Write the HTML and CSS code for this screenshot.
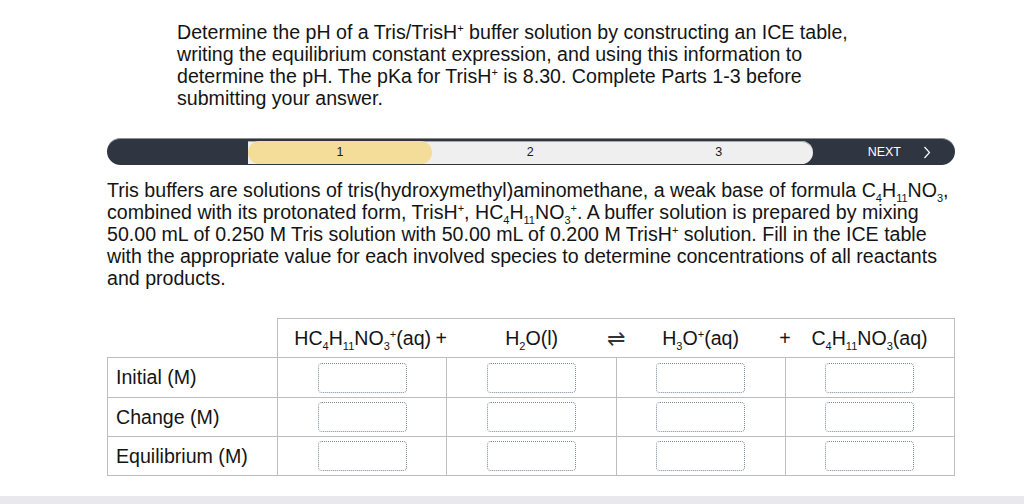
FILE: index.html
```html
<!DOCTYPE html>
<html>
<head>
<meta charset="utf-8">
<link rel="stylesheet" href="styles.css">
</head>
<body>
<div class="page">
  <p class="intro">Determine the pH of a Tris/TrisH<sup>+</sup> buffer solution by constructing an ICE table,<br>writing the equilibrium constant expression, and using this information to<br>determine the pH. The pKa for TrisH<sup>+</sup> is 8.30. Complete Parts 1-3 before<br>submitting your answer.</p>

  <div class="stepper">
    <div class="stepper-left"></div>
    <div class="track">
      <div class="step active">1</div>
      <div class="step">2</div>
      <div class="step">3</div>
    </div>
    <div class="next">
      <span class="next-label">NEXT</span>
      <svg class="chev" width="8" height="13" viewBox="0 0 8 13"><polyline points="1.5,1 6.5,6.5 1.5,12" fill="none" stroke="#ffffff" stroke-width="1.2"/></svg>
    </div>
  </div>

  <p class="body-text">Tris buffers are solutions of tris(hydroxymethyl)aminomethane, a weak base of formula C<sub>4</sub>H<sub>11</sub>NO<sub>3</sub>,<br>combined with its protonated form, TrisH<sup>+</sup>, HC<sub>4</sub>H<sub>11</sub>NO<sub>3</sub><sup>+</sup>. A buffer solution is prepared by mixing<br>50.00 mL of 0.250 M Tris solution with 50.00 mL of 0.200 M TrisH<sup>+</sup> solution. Fill in the ICE table<br>with the appropriate value for each involved species to determine concentrations of all reactants<br>and products.</p>

  <table class="ice">
    <colgroup>
      <col class="c-label"><col class="c-sp"><col class="c-sp"><col class="c-sp"><col class="c-sp">
    </colgroup>
    <thead>
      <tr class="head-row">
        <th class="blank"></th>
        <th class="eq" colspan="4">
          <div class="eq-line">
            <span class="sp">HC<sub>4</sub>H<sub>11</sub>NO<sub>3</sub><sup>+</sup>(aq)</span>
            <span class="op op-first">+</span>
            <span class="sp">H<sub>2</sub>O(l)</span>
            <span class="op arrow">⇌</span>
            <span class="sp">H<sub>3</sub>O<sup>+</sup>(aq)</span>
            <span class="op">+</span>
            <span class="sp">C<sub>4</sub>H<sub>11</sub>NO<sub>3</sub>(aq)</span>
          </div>
        </th>
      </tr>
    </thead>
    <tbody>
      <tr class="first-row">
        <td class="label">Initial (M)</td>
        <td><div class="box"></div></td>
        <td><div class="box"></div></td>
        <td><div class="box"></div></td>
        <td><div class="box"></div></td>
      </tr>
      <tr>
        <td class="label">Change (M)</td>
        <td><div class="box"></div></td>
        <td><div class="box"></div></td>
        <td><div class="box"></div></td>
        <td><div class="box"></div></td>
      </tr>
      <tr>
        <td class="label">Equilibrium (M)</td>
        <td><div class="box"></div></td>
        <td><div class="box"></div></td>
        <td><div class="box"></div></td>
        <td><div class="box"></div></td>
      </tr>
    </tbody>
  </table>
</div>
<div class="footer-bar"></div>
</body>
</html>
```
FILE: styles.css
```css
html, body {
  margin: 0;
  padding: 0;
  background: #ffffff;
}
body {
  width: 1024px;
  height: 504px;
  overflow: hidden;
  position: relative;
  font-family: "Liberation Sans", Arial, sans-serif;
  color: #141414;
}
.page {
  padding: 21px 0 0 107px;
  height: 475px;
}
p {
  margin: 0;
  font-size: 19.6px;
  line-height: 22px;
}
sup {
  font-size: 11px;
  line-height: 0;
  vertical-align: 7px;
}
sub {
  font-size: 11px;
  line-height: 0;
  vertical-align: -5px;
}
.intro {
  margin-left: 70px;
}

/* stepper */
.stepper {
  margin-top: 29px;
  width: 848px;
  height: 27px;
  background: #303542;
  border-radius: 14px;
  display: flex;
  align-items: center;
  box-sizing: border-box;
  border-top: 1px solid #8e8e8e;
}
.stepper-left {
  width: 141px;
  flex: none;
}
.track {
  width: 565px;
  height: 23px;
  flex: none;
  display: flex;
  background: #efefef;
  border-radius: 0 12px 12px 0;
  box-shadow: inset 0 1px 0 #a8a8a8;
}
.step {
  flex: 1;
  display: flex;
  align-items: center;
  justify-content: center;
  font-size: 12.5px;
  color: #1a1a1a;
}
.step.active {
  background: #f3dd98;
  border-radius: 12px;
  flex: 0 0 184px;
  margin-right: 4px;
}
.next {
  flex: 1;
  display: flex;
  align-items: center;
  justify-content: flex-end;
  padding-right: 24px;
  gap: 22px;
  color: #ffffff;
  font-size: 12.5px;
}
.chev {
  display: block;
}

.body-text {
  margin-top: 14px;
}

/* ICE table */
.ice {
  margin-top: 29px;
  border-collapse: collapse;
  table-layout: fixed;
  width: 848px;
  font-size: 19.6px;
}
.c-label { width: 170px; }
.c-sp { width: 169px; }
.ice td, .ice th {
  border: 1px solid #bdbdbd;
  padding: 0;
}
.ice th.blank {
  border-top: none;
  border-left: none;
}
.head-row {
  height: 39px;
}
.ice tbody tr {
  height: 39px;
}
.ice tbody tr.first-row {
  height: 40px;
}
.ice th.eq {
  font-weight: normal;
}
.eq-line {
  display: flex;
  align-items: center;
}
.sp {
  flex: 1;
  text-align: center;
  white-space: nowrap;
}
.op {
  width: 0;
  display: flex;
  justify-content: center;
  white-space: nowrap;
}
.op-first {
  position: relative;
  left: -6px;
}
.arrow {
  font-family: "DejaVu Sans", sans-serif;
  font-size: 22px;
  font-weight: 200;
  color: #333;
}
.ice td.label {
  padding-left: 8px;
  text-align: left;
}
.ice td {
  text-align: center;
}
.box {
  width: 87px;
  height: 28px;
  margin: 0 auto;
  border: 1px dotted #7d889b;
  border-radius: 4px;
  background: #ffffff;
}

.footer-bar {
  position: absolute;
  left: 0;
  right: 0;
  bottom: 0;
  height: 8px;
  background: #e8e8ed;
}
```
